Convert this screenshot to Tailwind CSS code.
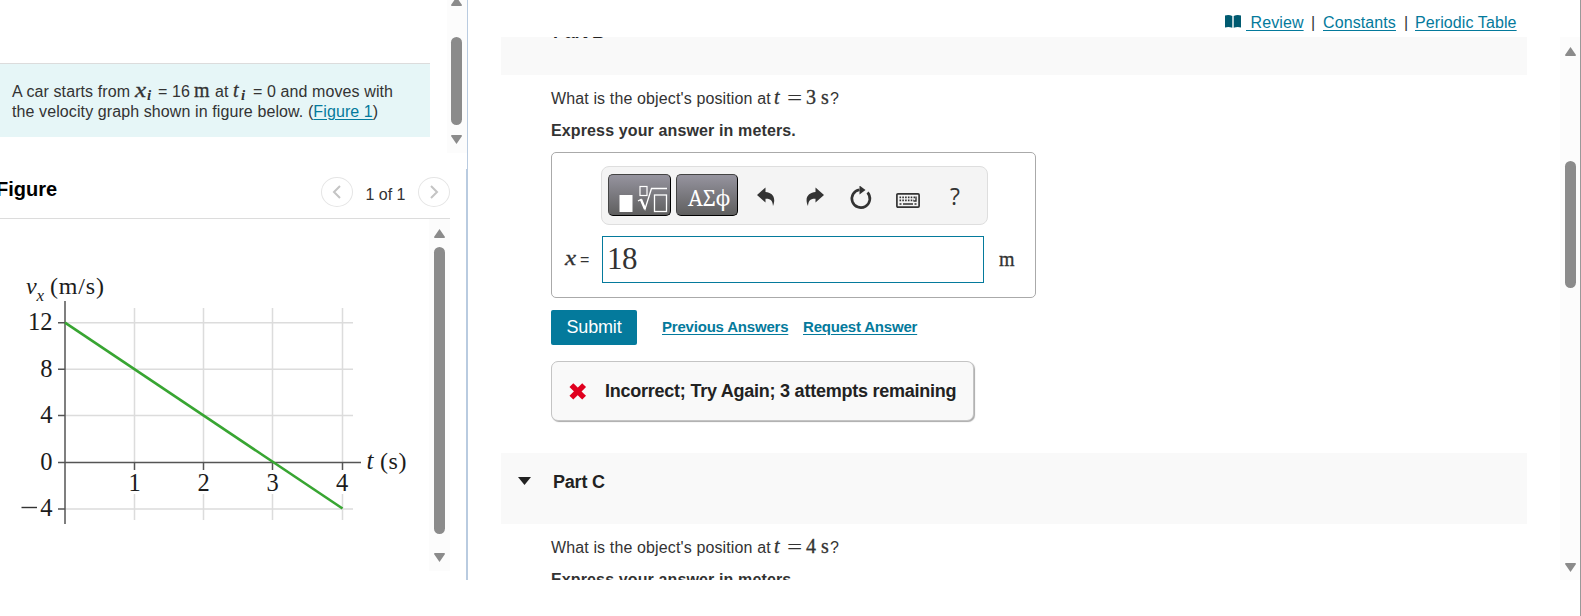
<!DOCTYPE html>
<html lang="en">
<head>
    <meta charset="UTF-8">
    <title>Part B - Velocity graph</title>
    <script src="https://cdn.jsdelivr.net/npm/@tailwindcss/browser@4"></script>
</head>
<body class="w-[1581px] h-[616px] overflow-hidden bg-white font-['Liberation_Sans',Arial,sans-serif] text-base leading-5 text-[#333]">

<div class="flex h-[616px] border-r border-[#999]">

    <!-- Left column: problem text and figure -->
    <div class="w-[468px] h-[580px] shrink-0 flex flex-col">
        <div class="h-[169px] flex justify-between border-r border-[#b9cbe0]">
            <div class="w-[430px] mt-[63px] h-[74px] border-t border-[#dcdcdc] bg-[#e6f6f7] pl-3 pt-[16px] whitespace-nowrap tracking-[0.1px]">
                <div class="h-[22px] flex items-baseline">
                    <span class="w-[123px]">A car starts from</span>
                    <span class="w-[12px] font-['Liberation_Serif',serif] italic text-xl leading-5 [-webkit-text-stroke:0.3px]"><span class="inline-block origin-left scale-x-125">x</span></span>
                    <span class="w-[11px] font-['Liberation_Serif',serif] italic text-[15px] leading-5 relative top-[3px] font-bold">i</span>
                    <span class="w-[36px]">= 16</span>
                    <span class="w-[21px] font-['Liberation_Serif',serif] text-xl leading-5 [-webkit-text-stroke:0.3px]">m</span>
                    <span class="w-[18px]">at</span>
                    <span class="w-[8px] font-['Liberation_Serif',serif] italic text-xl leading-5 [-webkit-text-stroke:0.3px]">t</span>
                    <span class="w-[12px] font-['Liberation_Serif',serif] italic text-[15px] leading-5 relative top-[3px] font-bold">i</span>
                    <span>= 0 and moves with</span>
                </div>
                <div>the velocity graph shown in figure below. (<a class="text-[#047a9c] underline underline-offset-2">Figure 1</a>)</div>
            </div>
            <div class="w-[20px] h-[153px] bg-[#fcfcfc] relative overflow-hidden">
                <svg class="absolute left-1 -top-[3px]" width="11" height="9"><path d="M5.5 0 L11 8 Q11 9 10 9 H1 Q0 9 0 8Z" fill="#8b8b8b"/></svg>
                <div class="absolute left-1 top-[37px] w-[11px] h-[88px] rounded-full bg-[#8b8b8b]"></div>
                <svg class="absolute left-1 top-[135px]" width="11" height="9"><path d="M5.5 9 L11 1 Q11 0 10 0 H1 Q0 0 0 1Z" fill="#8b8b8b"/></svg>
            </div>
        </div>

        <div class="h-[411px] border-r-2 border-[#b9cbe0]">
            <div class="w-[450px] h-[50px] flex border-b border-[#dcdcdc]">
                <h2 class="-ml-[4px] w-[325px] pt-[8px] text-xl leading-6 font-bold text-black">Figure</h2>
                <div class="mt-2 w-8 h-[30px] rounded-[50%] border border-[#e5e5e5] flex items-center justify-center">
                    <svg width="10" height="14" fill="none" stroke="#c4c4c4" stroke-width="2"><path d="M8 1 L2 7 L8 13"/></svg>
                </div>
                <span class="w-[65px] pt-[16px] text-center">1 of 1</span>
                <div class="mt-2 w-8 h-[30px] rounded-[50%] border border-[#e5e5e5] flex items-center justify-center">
                    <svg width="10" height="14" fill="none" stroke="#c4c4c4" stroke-width="2"><path d="M2 1 L8 7 L2 13"/></svg>
                </div>
            </div>
            <div class="w-[450px] h-[352px] flex">
                <!-- Velocity graph -->
                <svg width="429" height="352" viewBox="0 219 429 352" class="font-['Liberation_Serif',serif] text-[25px]" fill="#1c1c1c">
                    <g stroke="#dcdcdc" stroke-width="1.5">
                        <path d="M65 322.7H353 M65 369.2H353 M65 415.5H353 M65 509H353"/>
                        <path d="M134.5 308V462 M203.5 308V462 M272.5 308V462 M342.5 308V462"/>
                        <path d="M134.5 494V520 M203.5 494V520 M272.5 494V520 M342.5 494V520"/>
                    </g>
                    <g stroke="#555" stroke-width="1.5">
                        <path d="M65 301V524 M58 462.4H361"/>
                        <path d="M58 322.7H65 M58 369.2H65 M58 415.5H65 M58 509H65"/>
                        <path d="M134.5 462V470 M203.5 462V470 M272.5 462V470 M342.5 462V470"/>
                    </g>
                    <path d="M65 322.7 L342.5 508.5" stroke="#38a532" stroke-width="2.6"/>
                    <text x="26" y="293.5" font-style="italic" font-size="24">v</text>
                    <text x="36.5" y="300.5" font-style="italic" font-size="17">x</text>
                    <text x="50" y="293.5" font-size="24" textLength="54">(m/s)</text>
                    <g text-anchor="end" font-size="24.5">
                        <text x="52.5" y="330">12</text>
                        <text x="52.5" y="376.5">8</text>
                        <text x="52.5" y="423">4</text>
                        <text x="52.5" y="469.5">0</text>
                        <text x="52.5" y="515.5">4</text>
                    </g>
                    <path d="M21.5 507.5H37" stroke="#333" stroke-width="1.4"/>
                    <g text-anchor="middle" font-size="24.5">
                        <text x="134.5" y="491">1</text>
                        <text x="203.5" y="491">2</text>
                        <text x="272.5" y="491">3</text>
                        <text x="342" y="491">4</text>
                    </g>
                    <text x="366.5" y="469" font-style="italic">t</text>
                    <text x="380" y="469" font-size="24" textLength="26.5">(s)</text>
                </svg>
                <div class="w-[21px] bg-[#fcfcfc] pl-[5px] flex flex-col">
                    <svg class="mt-[10px]" width="11" height="9"><path d="M5.5 0 L11 8 Q11 9 10 9 H1 Q0 9 0 8Z" fill="#8b8b8b"/></svg>
                    <div class="mt-[9px] w-[11px] h-[287px] rounded-full bg-[#8b8b8b]"></div>
                    <svg class="mt-[19px]" width="11" height="9"><path d="M5.5 9 L11 1 Q11 0 10 0 H1 Q0 0 0 1Z" fill="#8b8b8b"/></svg>
                </div>
            </div>
        </div>
    </div>

    <!-- Right column: question parts -->
    <div class="grow h-[580px] flex flex-col">
        <div class="h-[37px] shrink-0 pt-[13px] pl-[757px] flex whitespace-nowrap text-[#047a9c] tracking-[0.1px]">
            <svg class="mt-[2px] mr-[5px] shrink-0" width="16" height="13" fill="#005a70"><path d="M0 .5 Q4-.6 7.3 1V12.8 Q4 11.4 0 12.4Z M8.7 1 Q12-.6 16 .5V12.4 Q12 11.4 8.7 12.8Z"/></svg>
            <a class="w-[65px] underline underline-offset-2 whitespace-pre"> Review</a>
            <span class="w-[12px] text-[#333]">|</span>
            <a class="w-[81px] underline underline-offset-2">Constants</a>
            <span class="w-[11px] text-[#333]">|</span>
            <a class="underline underline-offset-2">Periodic Table</a>
        </div>

        <div class="h-[543px] flex overflow-hidden">
            <div class="w-[1026px] ml-[33px] mr-[33px] h-[543px] overflow-hidden shrink-0">
                <div class="h-[38px] bg-[#f9f9f9] overflow-hidden pl-[52px]">
                    <h3 class="-mt-[15px] text-lg leading-5 font-bold text-[#222] tracking-[-0.2px]">Part B</h3>
                </div>
                <div class="pl-[50px]">
                    <div class="pt-[12px] h-[33px] flex items-baseline whitespace-nowrap">
                        <span class="w-[223px] tracking-[0.13px]">What is the object's position at</span>
                        <span class="w-[13px] font-['Liberation_Serif',serif] italic text-xl leading-5 [-webkit-text-stroke:0.3px]">t</span>
                        <span class="w-[19px] font-['Liberation_Serif',serif] text-xl leading-5"><span class="inline-block origin-left scale-x-135 relative top-px">=</span></span>
                        <span class="w-[15px] font-['Liberation_Serif',serif] text-xl leading-5 [-webkit-text-stroke:0.3px]">3</span>
                        <span class="w-[9px] font-['Liberation_Serif',serif] text-xl leading-5 [-webkit-text-stroke:0.3px]">s</span>
                        <span>?</span>
                    </div>
                    <p class="mt-[13px] font-bold tracking-[0.13px]">Express your answer in meters.</p>

                    <!-- Answer box -->
                    <div class="mt-[11px] w-[485px] h-[146px] rounded-[5px] border border-[#aaa] flex flex-col">
                        <div class="ml-[49px] mt-[13px] w-[387px] h-[59px] rounded-lg border border-[#dedede] bg-[#f4f4f4] flex">
                            <div class="ml-[6px] mt-[7px] w-[63px] h-[42px] rounded-[5px] border border-[#444] border-b-black border-r-black bg-linear-to-b from-[#96949f] to-[#5f5f5f]">
                                <svg width="61" height="40" fill="none" stroke="#fff">
                                    <rect x="10.5" y="20" width="13" height="17" fill="#fff" stroke="none"/>
                                    <rect x="31" y="11.5" width="7" height="9" stroke-width="1.2"/>
                                    <path d="M29 26 L32 24.5 L36 34 L42.5 13.5 H58" stroke-width="1.3"/>
                                    <path d="M32 24.5 L36 34" stroke-width="2.4"/>
                                    <rect x="45.5" y="20" width="12" height="16.5" stroke-width="1.3"/>
                                </svg>
                            </div>
                            <div class="ml-[5px] mt-[7px] w-[62px] h-[42px] rounded-[5px] border border-[#444] border-b-black border-r-black bg-linear-to-b from-[#96949f] to-[#5f5f5f] pl-[11px] pt-[11px] font-['Noto_Serif','Liberation_Serif',serif] text-[21px] leading-6 text-white">ΑΣϕ</div>
                            <svg class="ml-[19px] mt-[20px]" width="20" height="20" fill="#333"><path d="M0 8 L8.5 .5 V5 C15 5.5 19.5 10 16 19 C15.5 13.5 14 11.5 8.5 11.7 V15.5Z"/></svg>
                            <svg class="ml-[28px] mt-[20px]" width="20" height="20" fill="#333"><path d="M19 8 L10.5 .5 V5 C4 5.5 -1 10 3 19 C3.5 13.5 5 11.5 10.5 11.7 V15.5Z"/></svg>
                            <svg class="ml-[24px] mt-[19px]" width="23" height="24" fill="none" stroke="#333" stroke-width="2.6"><path d="M10.5 3.7 A9 9 0 1 0 18.5 6.5"/><path d="M10.5 -.5 L16.5 3.9 L10.5 8.5Z" fill="#333" stroke="none"/></svg>
                            <svg class="ml-[24px] mt-[26px]" width="24" height="16" fill="none" stroke="#333">
                                <rect x=".9" y=".9" width="22.2" height="13.2" rx="1" stroke-width="1.7"/>
                                <path d="M3.5 4.3H19" stroke-width="1.7" stroke-dasharray="1.6 1.2"/>
                                <path d="M3.5 7.4H18" stroke-width="1.7" stroke-dasharray="1.6 1.2"/>
                                <path d="M3.5 11H5.5 M7 11H17 M18.5 11H20.5" stroke-width="1.6"/>
                                <path d="M20 3.5V8H17.5" stroke-width="1.4"/>
                            </svg>
                            <span class="ml-[30px] mt-[17px] text-[23px] leading-6 font-['Open_Sans','Liberation_Sans',sans-serif]">?</span>
                        </div>
                        <div class="mt-[11px] flex h-[47px]">
                            <div class="w-[50px] pl-[13px] pt-[12px] flex items-baseline">
                                <span class="w-[15px] font-['Liberation_Serif',serif] italic text-xl leading-5 [-webkit-text-stroke:0.3px]"><span class="inline-block origin-left scale-x-125">x</span></span>
                                <span>=</span>
                            </div>
                            <div class="w-[382px] h-[47px] border border-[#047a9c] pl-[4px] pt-[6px] font-['Liberation_Serif',serif] text-[31px] leading-8 tracking-[-0.4px]">18</div>
                            <span class="pl-[15px] pt-[13px] font-['Liberation_Serif',serif] text-xl leading-5 [-webkit-text-stroke:0.3px]">m</span>
                        </div>
                    </div>

                    <div class="mt-[12px] h-[35px] flex whitespace-nowrap">
                        <button class="w-[86px] h-[35px] rounded-[2px] bg-[#047a9c] pb-[2px] text-lg leading-5 text-white tracking-[-0.15px]">Submit</button>
                        <a class="ml-[25px] pt-[7px] w-[141px] text-[15px] font-bold text-[#047a9c] underline underline-offset-2 tracking-[-0.2px]">Previous Answers</a>
                        <a class="pt-[7px] text-[15px] font-bold text-[#047a9c] underline underline-offset-2 tracking-[-0.2px]">Request Answer</a>
                    </div>

                    <div class="mt-[16px] w-[423px] h-[60px] rounded-[7px] border border-[#c4c4c4] bg-[#f9f9f9] shadow-[1px_1px_1px_#aaa] flex items-center whitespace-nowrap">
                        <svg class="ml-[17px] mr-[18px] shrink-0" width="18" height="17" stroke="#e0001f" stroke-width="5.4" stroke-linecap="square"><path d="M4.3 4 L13.2 12.8 M13.2 4 L4.3 12.8"/></svg>
                        <span class="text-lg leading-5 font-bold text-[#222] tracking-[-0.24px]">Incorrect; Try Again; 3 attempts remaining</span>
                    </div>
                </div>

                <div class="mt-[32px] h-[71px] bg-[#f9f9f9] flex">
                    <svg class="ml-[17px] mt-[24px]" width="13" height="8" fill="#222"><path d="M0 0H13L6.5 8Z"/></svg>
                    <h3 class="ml-[22px] mt-[19px] text-lg leading-5 font-bold text-[#222] tracking-[-0.2px]">Part C</h3>
                </div>
                <div class="pl-[50px]">
                    <div class="pt-[12px] h-[33px] flex items-baseline whitespace-nowrap">
                        <span class="w-[223px] tracking-[0.13px]">What is the object's position at</span>
                        <span class="w-[13px] font-['Liberation_Serif',serif] italic text-xl leading-5 [-webkit-text-stroke:0.3px]">t</span>
                        <span class="w-[19px] font-['Liberation_Serif',serif] text-xl leading-5"><span class="inline-block origin-left scale-x-135 relative top-px">=</span></span>
                        <span class="w-[15px] font-['Liberation_Serif',serif] text-xl leading-5 [-webkit-text-stroke:0.3px]">4</span>
                        <span class="w-[9px] font-['Liberation_Serif',serif] text-xl leading-5 [-webkit-text-stroke:0.3px]">s</span>
                        <span>?</span>
                    </div>
                    <p class="mt-[13px] font-bold tracking-[0.13px]">Express your answer in meters.</p>
                </div>
            </div>

            <div class="grow bg-[#fcfcfc] pl-[5px] flex flex-col">
                <svg class="mt-[10px]" width="11" height="9"><path d="M5.5 0 L11 8 Q11 9 10 9 H1 Q0 9 0 8Z" fill="#8b8b8b"/></svg>
                <div class="mt-[105px] w-[11px] h-[127px] rounded-full bg-[#8b8b8b]"></div>
                <svg class="mt-[275px]" width="11" height="9"><path d="M5.5 9 L11 1 Q11 0 10 0 H1 Q0 0 0 1Z" fill="#8b8b8b"/></svg>
            </div>
        </div>
    </div>
</div>

</body>
</html>
